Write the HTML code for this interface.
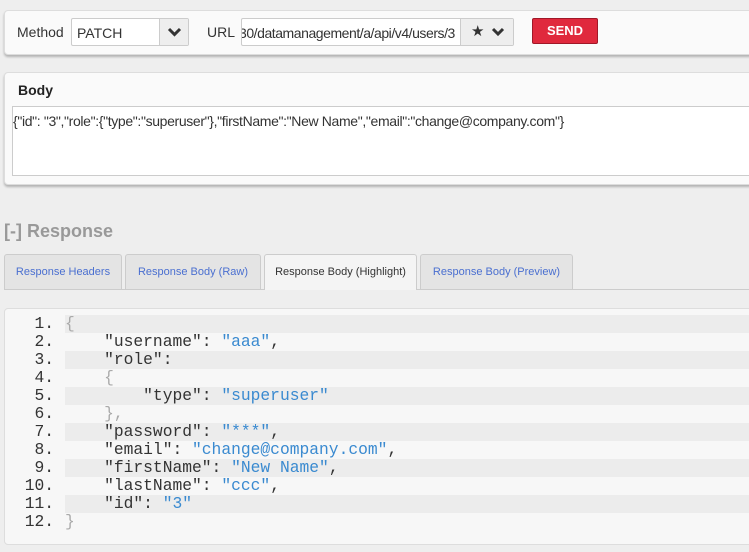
<!DOCTYPE html>
<html><head><style>
body{margin:0;width:749px;height:552px;background:#eeeeee;font-family:"Liberation Sans",sans-serif;position:relative;overflow:hidden}
.abs{position:absolute}
.panel{background:#fafafa;border:1px solid #ddd;border-radius:4px;box-shadow:0 2px 2px rgba(0,0,0,.25)}
.lbl{font-size:14px;color:#333}
.code{font-family:"Liberation Mono","Courier New",monospace;font-size:16.3px;color:#333}
.ln{position:absolute;left:4px;width:50px;text-align:right;color:#333}
.row{position:absolute;left:65px;right:0;height:18px;line-height:18px;white-space:pre}
.s{color:#3a8ad0}.p{color:#aaa}
.tab{position:absolute;top:254px;height:35px;background:#e4e4e4;border:1px solid #ccc;border-bottom:none;border-radius:3px 3px 0 0;font-size:11px;color:#4a6fd0;line-height:35px;text-align:center;box-sizing:border-box}
</style></head><body>
<div class="abs panel" style="left:4px;top:10px;width:760px;height:43px"></div>
<div class="abs lbl" style="left:17px;top:24px">Method</div>
<div class="abs" style="left:71px;top:18px;width:116px;height:26px;background:#fff;border:1px solid #ccc;border-radius:2px;overflow:hidden">
<div style="position:absolute;left:5px;top:6px;font-size:14px;color:#333">PATCH</div>
<div style="position:absolute;left:87px;top:0;width:29px;height:26px;background:#eee;border-left:1px solid #ccc"><svg width="29" height="26"><path d="M9 10 L14.5 15.5 L20 10" stroke="#333" stroke-width="3" fill="none"/></svg></div></div>
<div class="abs lbl" style="left:207px;top:24px">URL</div>
<div class="abs" style="left:241px;top:18px;width:271px;height:26px;background:#fff;border:1px solid #ccc;border-radius:2px;overflow:hidden"><div style="position:absolute;left:-3px;top:6px;font-size:14px;color:#333;white-space:nowrap;letter-spacing:-0.45px">30/datamanagement/a/api/v4/users/3</div>
<div style="position:absolute;left:218px;top:0;width:53px;height:26px;background:#eee;border-left:1px solid #ccc"><span style="position:absolute;left:10px;top:3px;font-size:15px;color:#333">&#9733;</span><svg style="position:absolute;left:29px;top:0" width="16" height="26"><path d="M3 10 L8 15 L13 10" stroke="#333" stroke-width="3" fill="none"/></svg></div></div>
<div class="abs" style="left:532px;top:18px;width:66px;height:26px;background:#e0293d;border:1px solid #a01828;box-sizing:border-box;border-radius:2px;color:#fff;font-weight:bold;font-size:13px;text-align:center;line-height:24px">SEND</div>

<div class="abs panel" style="left:4px;top:72px;width:760px;height:111px"></div>
<div class="abs" style="left:18px;top:82px;font-size:14px;font-weight:bold;color:#222">Body</div>
<div class="abs" style="left:12px;top:106px;width:750px;height:68px;background:#fff;border:1px solid #ccc"></div>
<div class="abs" style="left:13px;top:113px;font-size:14px;color:#333;white-space:nowrap;letter-spacing:-0.35px">{"id": "3","role":{"type":"superuser"},"firstName":"New Name","email":"change@company.com"}</div>

<div class="abs" style="left:4px;top:221px;font-size:18px;font-weight:bold;color:#999">[-] Response</div>
<div class="abs" style="left:4px;top:289px;width:745px;border-top:1px solid #ccc"></div>
<div class="tab" style="left:4px;width:118px">Response Headers</div>
<div class="tab" style="left:125px;width:136px">Response Body (Raw)</div>
<div class="tab" style="left:264px;width:153px;background:#f4f4f4;height:36px;color:#333">Response Body (Highlight)</div>
<div class="tab" style="left:420px;width:153px">Response Body (Preview)</div>

<div class="abs" style="left:4px;top:308px;width:760px;height:235px;background:#f7f7f7;border:1px solid #ddd;border-radius:4px"></div>
<div class="abs code" style="left:0;top:315px;width:749px;height:216px">
<div class="row" style="top:0;background:#ececec"><span class="p">{</span></div>
<div class="row" style="top:18px">    "username": <span class="s">"aaa"</span>,</div>
<div class="row" style="top:36px;background:#ececec">    "role":</div>
<div class="row" style="top:54px">    <span class="p">{</span></div>
<div class="row" style="top:72px;background:#ececec">        "type": <span class="s">"superuser"</span></div>
<div class="row" style="top:90px">    <span class="p">},</span></div>
<div class="row" style="top:108px;background:#ececec">    "password": <span class="s">"***"</span>,</div>
<div class="row" style="top:126px">    "email": <span class="s">"change@company.com"</span>,</div>
<div class="row" style="top:144px;background:#ececec">    "firstName": <span class="s">"New Name"</span>,</div>
<div class="row" style="top:162px">    "lastName": <span class="s">"ccc"</span>,</div>
<div class="row" style="top:180px;background:#ececec">    "id": <span class="s">"3"</span></div>
<div class="row" style="top:198px"><span class="p">}</span></div>
<div class="ln" style="top:0;line-height:18px">1.<br>2.<br>3.<br>4.<br>5.<br>6.<br>7.<br>8.<br>9.<br>10.<br>11.<br>12.</div>
</div>
</body></html>
